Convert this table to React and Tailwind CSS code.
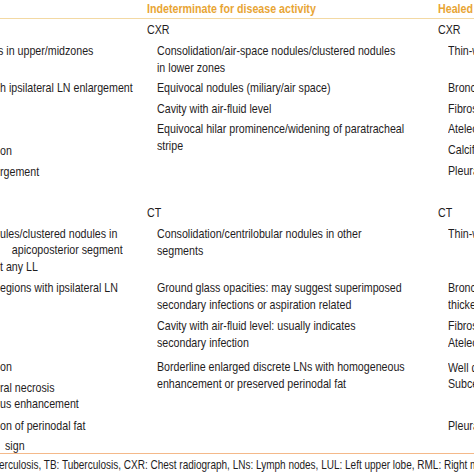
const sans = "font-['Liberation_Sans',Arial,sans-serif]"
// Arial Narrow look: Liberation Sans squeezed horizontally
const squeeze = 'inline-block origin-left scale-x-[0.82] whitespace-nowrap'

// visible fragment of the first column (the table is cut on the left)
const activeCol = [
  { mt: 'mt-[23.75px]', ml: 'ml-[-2px]', lines: ['s in upper/midzones'] },
  { mt: 'mt-[20.5px]', ml: 'ml-0', lines: ['h ipsilateral LN enlargement'] },
  { mt: 'mt-[46.5px]', ml: 'ml-0', lines: ['on'] },
  { mt: 'mt-[4.5px]', ml: 'ml-0', lines: ['rgement'] },
  { mt: 'mt-[45.5px]', ml: 'ml-0', lines: ['ules/clustered nodules in', '\u00a0\u00a0\u00a0\u00a0apicoposterior segment', 't any LL'] },
  { mt: 'mt-[4.5px]', ml: 'ml-0', lines: ['egions with ipsilateral LN'] },
  { mt: 'mt-[62.5px]', ml: 'ml-0', lines: ['on'] },
  { mt: 'mt-[4.5px]', ml: 'ml-0', lines: ['ral necrosis', 'us enhancement'] },
  { mt: 'mt-[5px]', ml: 'ml-0', lines: ['on of perinodal fat'] },
  { mt: 'mt-[3.5px]', ml: 'ml-[5px]', lines: ['sign'] },
]

const indeterminateCol = [
  { mt: 'mt-[3px]', label: true, lines: ['CXR'] },
  { mt: 'mt-[4.5px]', lines: ['Consolidation/air-space nodules/clustered nodules', 'in lower zones'] },
  { mt: 'mt-[4px]', lines: ['Equivocal nodules (miliary/air space)'] },
  { mt: 'mt-[4.5px]', lines: ['Cavity with air-fluid level'] },
  { mt: 'mt-[3.5px]', lines: ['Equivocal hilar prominence/widening of paratracheal', 'stripe'] },
  { mt: 'mt-[51px]', label: true, lines: ['CT'] },
  { mt: 'mt-[4.5px]', lines: ['Consolidation/centrilobular nodules in other', 'segments'] },
  { mt: 'mt-[21px]', lines: ['Ground glass opacities: may suggest superimposed', 'secondary infections or aspiration related'] },
  { mt: 'mt-[5px]', lines: ['Cavity with air-fluid level: usually indicates', 'secondary infection'] },
  { mt: 'mt-[8px]', lines: ['Borderline enlarged discrete LNs with homogeneous', 'enhancement or preserved perinodal fat'] },
]

const healedCol = [
  { mt: 'mt-[3px]', label: true, lines: ['CXR'] },
  { mt: 'mt-[4.5px]', lines: ['Thin-walled cavity'] },
  { mt: 'mt-[20.5px]', lines: ['Bronchiectasis'] },
  { mt: 'mt-[4.5px]', lines: ['Fibrosis'] },
  { mt: 'mt-[3.5px]', lines: ['Atelectasis'] },
  { mt: 'mt-[4.5px]', lines: ['Calcified nodules'] },
  { mt: 'mt-[4.5px]', lines: ['Pleural thickening'] },
  { mt: 'mt-[25.5px]', label: true, lines: ['CT'] },
  { mt: 'mt-[4.5px]', lines: ['Thin-walled cavity'] },
  { mt: 'mt-[37.5px]', lines: ['Bronchiectasis with bronchial wall', 'thickening'] },
  { mt: 'mt-[5px]', lines: ['Fibrosis'] },
  { mt: 'mt-0', lines: ['Atelectasis'] },
  { mt: 'mt-[8.5px]', lines: ['Well defined nodules'] },
  { mt: 'mt-0', lines: ['Subcentimeter lymph nodes'] },
  { mt: 'mt-[25.5px]', lines: ['Pleural thickening'] },
]

function Lines({ lines }) {
  return lines.map((line) => (
    <div key={line} className="h-[16.5px] leading-[16.5px]">
      <span className={squeeze}>{line}</span>
    </div>
  ))
}

function Cell({ item }) {
  return (
    <div className={`${item.mt} ${item.label ? '' : 'pl-[10px]'}`}>
      <Lines lines={item.lines} />
    </div>
  )
}

export default function App() {
  return (
    <div className={`h-[474px] w-[474px] overflow-hidden bg-white text-[13px] text-[#1f1d1e] ${sans}`}>
      <div className="flex h-[19px] items-center border-b border-[#f3d9a3] font-bold text-[#e8a534]">
        <div className="w-[147px] shrink-0" />
        <div className="w-[291px] shrink-0 leading-[16.5px]">
          <span className={squeeze}>Indeterminate for disease activity</span>
        </div>
        <div className="min-w-0 flex-1 overflow-hidden leading-[16.5px]">
          <span className={squeeze}>Healed disease</span>
        </div>
      </div>

      <div className="flex h-[435px] overflow-hidden border-b border-[#f4b98a]">
        <div className="w-[147px] shrink-0 overflow-hidden">
          {activeCol.map((item, i) => (
            <div key={i} className={`${item.mt} ${item.ml}`}>
              <Lines lines={item.lines} />
            </div>
          ))}
        </div>
        <div className="w-[291px] shrink-0">
          {indeterminateCol.map((item, i) => (
            <Cell key={i} item={item} />
          ))}
        </div>
        <div className="min-w-0 flex-1 overflow-hidden">
          {healedCol.map((item, i) => (
            <Cell key={i} item={item} />
          ))}
        </div>
      </div>

      <div className="ml-[-1px] mt-[4px] text-[12.2px] leading-[14px]">
        <span className={squeeze}>
          erculosis, TB: Tuberculosis, CXR: Chest radiograph, LNs: Lymph nodes, LUL: Left upper lobe, RML: Right middle lobe
        </span>
      </div>
    </div>
  )
}
